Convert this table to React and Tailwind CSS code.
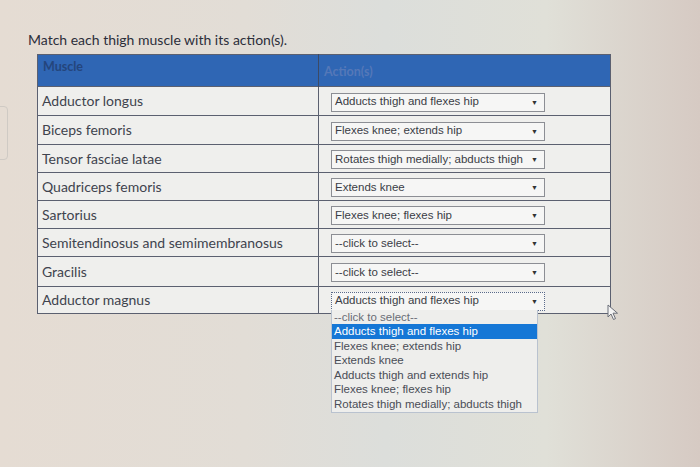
import React from "react";

const rows = [
  { muscle: "Adductor longus", action: "Adducts thigh and flexes hip", h: "h-[29px]" },
  { muscle: "Biceps femoris", action: "Flexes knee; extends hip", h: "h-[29px]" },
  { muscle: "Tensor fasciae latae", action: "Rotates thigh medially; abducts thigh", h: "h-[28px]" },
  { muscle: "Quadriceps femoris", action: "Extends knee", h: "h-[28px]" },
  { muscle: "Sartorius", action: "Flexes knee; flexes hip", h: "h-[28px]" },
  { muscle: "Semitendinosus and semimembranosus", action: "--click to select--", h: "h-[28px]" },
  { muscle: "Gracilis", action: "--click to select--", h: "h-[30px]" },
  { muscle: "Adductor magnus", action: "Adducts thigh and flexes hip", h: "h-[27px]", open: true },
];

const options = [
  "--click to select--",
  "Adducts thigh and flexes hip",
  "Flexes knee; extends hip",
  "Extends knee",
  "Adducts thigh and extends hip",
  "Flexes knee; flexes hip",
  "Rotates thigh medially; abducts thigh",
];

const FakeSelect = ({ value, open }) => (
  <div className="relative font-['Liberation_Sans',Arial,sans-serif]">
    <div
      className={`flex h-[19px] w-[214px] items-center justify-between bg-[#f6f6f5] pl-[3px] pr-[6px] text-[11.5px] leading-none text-[#3a3d46] ${
        open ? "border border-dotted border-[#5a6a8a]" : "border border-[#8c8e94]"
      }`}
    >
      <span>{value}</span>
      <span className="text-[7px] text-[#333]">▼</span>
    </div>

    {/* open dropdown list */}
    {open && (
      <ul className="absolute left-0 top-[18px] z-10 w-[207px] border-x border-b border-[#b9c2cf] bg-[#eeeeec] text-[11.5px] leading-[14.6px] text-[#4a4d57]">
        {options.map((o, i) => (
          <li
            key={o}
            className={`pl-[2px] ${
              i === 1 ? "bg-[#1577d6] text-white" : i === 0 ? "text-[#6a6d76]" : ""
            }`}
          >
            {o}
          </li>
        ))}
      </ul>
    )}
  </div>
);

export default function App() {
  return (
    <div className="relative h-[467px] w-[700px] overflow-hidden bg-[linear-gradient(90deg,#e5dcd3_0%,#e2ddd6_35%,#dcdedb_55%,#e0e0d8_78%,#d6cac3_100%)] font-['Liberation_Sans',Arial,sans-serif]">
      {/* edge of a panel peeking in on the left */}
      <div className="absolute left-[-12px] top-[106px] h-[54px] w-[20px] rounded-[4px] border border-[#cfcac4]" />

      <div className="pl-[28px] pt-[31px]">
        <p className="font-['Lato',sans-serif] text-[14px] leading-[18px] text-[#2c2e3a]">
          Match each thigh muscle with its action(s).
        </p>

        <table className="ml-[9px] mt-[5px] border-collapse border-[1.5px] border-[#5b6070] font-['Lato',sans-serif]">
          <thead>
            <tr className="h-[32px] bg-[#2f66b4] text-left">
              <th className="w-[281px] border-r-[1.5px] border-[#3c4a66] px-[5px] pb-[6px] align-middle text-[12.5px] font-bold text-[#24457c]">
                Muscle
              </th>
              <th className="w-[292px] px-[5px] pt-[4px] align-middle text-[12.5px] font-bold text-[#5578b8]">
                Action(s)
              </th>
            </tr>
          </thead>
          <tbody>
            {rows.map((r) => (
              <tr key={r.muscle} className={`${r.h} border-t-[1.5px] border-[#5b6070] bg-[#efefed]`}>
                <td className="border-r-[1.5px] border-[#5b6070] px-[4px] pb-[1px] align-middle text-[14px] text-[#40434e]">
                  {r.muscle}
                </td>
                <td className="pl-[12px] pt-[2px] align-middle">
                  <FakeSelect value={r.action} open={r.open} />
                </td>
              </tr>
            ))}
          </tbody>
        </table>
      </div>

      {/* mouse cursor */}
      <svg className="absolute left-[607px] top-[304px]" width="13" height="17" viewBox="0 0 13 17">
        <path
          d="M1 1 L1 13 L4 10 L6.5 15.5 L8.5 14.6 L6 9.2 L10.5 9.2 Z"
          fill="#f4f4f4"
          stroke="#6a6e78"
          strokeWidth="1"
          strokeLinejoin="round"
        />
      </svg>
    </div>
  );
}
